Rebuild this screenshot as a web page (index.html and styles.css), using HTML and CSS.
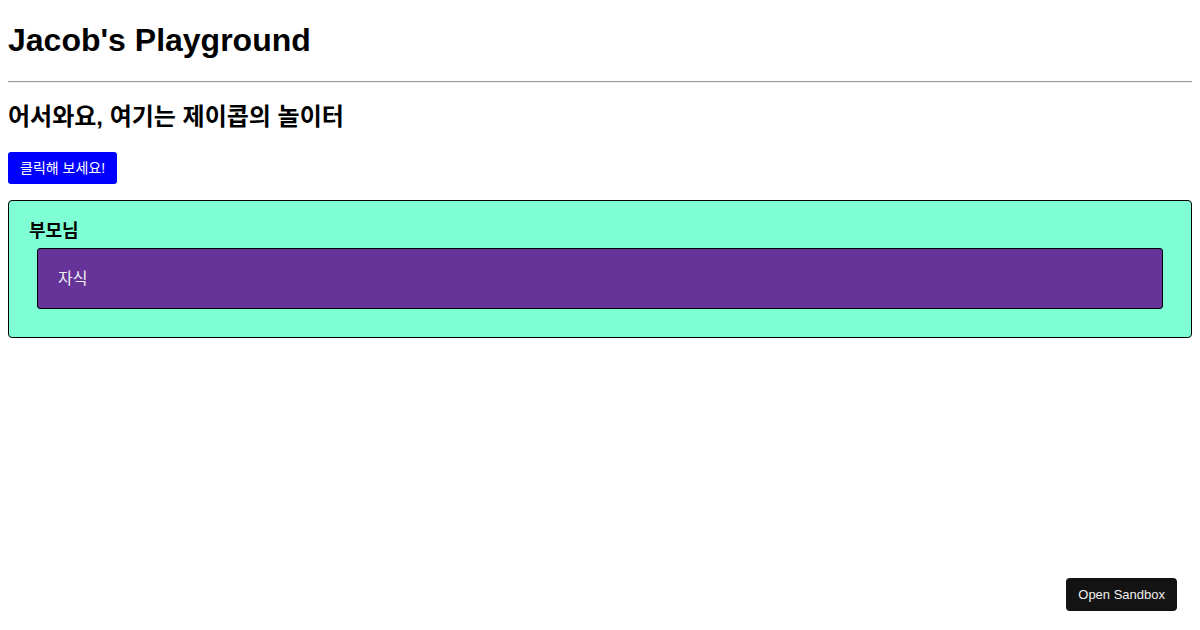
FILE: index.html
```html
<!DOCTYPE html>
<html lang="ko">
<head>
<meta charset="utf-8">
<title>Jacob's Playground</title>
<link rel="stylesheet" href="styles.css">
</head>
<body>
<h1 class="title">Jacob's Playground</h1>
<hr class="rule">
<h2 class="subtitle">어서와요, 여기는 제이콥의 놀이터</h2>
<button class="cta" type="button">클릭해 보세요!</button>
<div class="parent">
  <div class="parent-label">부모님</div>
  <div class="child">자식</div>
</div>
<a class="sandbox" href="#">Open Sandbox</a>
</body>
</html>
```

FILE: styles.css
```css
html, body {
  margin: 0;
  padding: 0;
  background: #ffffff;
}
body {
  padding: 0 8px;
  font-family: "Liberation Sans", Arial, "Noto Sans CJK KR", sans-serif;
  color: #000;
}
.title {
  margin: 0;
  padding-top: 22px;
  font-size: 32px;
  font-weight: bold;
  line-height: 37px;
}
.rule {
  margin: 22px 0 0;
  border: 0;
  border-top: 1px solid #9a9a9a;
  border-bottom: 1px solid #eeeeee;
  height: 0;
}
.subtitle {
  margin: 20px 0 0;
  font-size: 24px;
  font-weight: bold;
  line-height: 28px;
}
.cta {
  display: block;
  margin-top: 21px;
  height: 32px;
  padding: 0 12px;
  border: 0;
  border-radius: 3px;
  background: #0000ff;
  color: #ffffff;
  font-family: "Liberation Sans", Arial, "Noto Sans CJK KR", sans-serif;
  font-size: 14px;
  line-height: 32px;
}
.parent {
  margin-top: 16px;
  padding: 20px;
  background: #7fffd4;
  border: 1px solid #000;
  border-radius: 4px;
}
.parent-label {
  font-size: 18px;
  font-weight: bold;
  line-height: 20px;
}
.child {
  margin: 7px 8px 8px;
  padding: 20px;
  background: #663399;
  border: 1px solid #000;
  border-radius: 3px;
  color: #eeeeee;
  font-size: 16px;
  line-height: 19px;
}
.sandbox {
  position: fixed;
  right: 23px;
  bottom: 19px;
  height: 33px;
  padding: 0 12px;
  background: #131313;
  color: #f0f0f0;
  border-radius: 4px;
  font-family: "Liberation Sans", Arial, sans-serif;
  font-size: 13px;
  line-height: 33px;
  text-decoration: none;
}
```
